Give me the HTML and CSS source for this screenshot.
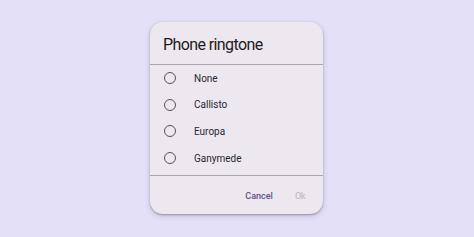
FILE: index.html
```html
<!DOCTYPE html>
<html lang="en">

<head>
    <meta charset="UTF-8">
    <meta name="viewport" content="width=device-width, initial-scale=1.0">
    <title>Phone ringtone</title>
    <link rel="stylesheet" href="styles.css">
</head>

<body>
    <div class="dialog">
        <h2 class="dialog-title">Phone ringtone</h2>
        <div class="dialog-list">
            <label class="option"><span class="radio"></span>None</label>
            <label class="option"><span class="radio"></span>Callisto</label>
            <label class="option"><span class="radio"></span>Europa</label>
            <label class="option"><span class="radio"></span>Ganymede</label>
        </div>
        <div class="dialog-actions">
            <button class="action">Cancel</button>
            <button class="action disabled">Ok</button>
        </div>
    </div>
</body>

</html>
```

FILE: styles.css
```css
body {
    font-family: Roboto, 'Noto Sans', sans-serif;
    margin: 0;
    width: 474px;
    height: 237px;
    background-color: #e3e0f7;
    display: flex;
    justify-content: center;
    padding-top: 22px;
    box-sizing: border-box;
}

.dialog {
    width: 173px;
    height: 192px;
    margin-left: -1px;
    background-color: #ede8ef;
    border-radius: 13px;
    box-shadow: 0 1px 2px rgba(40, 30, 70, 0.35), 0 2px 6px rgba(40, 30, 70, 0.15);
    display: flex;
    flex-direction: column;
}

.dialog-title {
    margin: 0;
    padding: 13px 13px 0;
    height: 29px;
    font-size: 16px;
    font-weight: 400;
    letter-spacing: -0.6px;
    color: #1d1b20;
    border-bottom: 1px solid #a9a5ad;
}

.dialog-list {
    display: flex;
    flex-direction: column;
    height: 110px;
    border-bottom: 1px solid #a9a5ad;
}

.option {
    display: flex;
    align-items: center;
    height: 26.6px;
    font-size: 10px;
    color: #2a2730;
    padding-left: 14px;
}

.radio {
    width: 10px;
    height: 10px;
    border: 1.5px solid #55505b;
    border-radius: 50%;
    margin-right: 18px;
}

.dialog-actions {
    flex: 1;
    display: flex;
    justify-content: flex-end;
    align-items: center;
    gap: 22px;
    padding-right: 18px;
    padding-top: 2px;
}

.action {
    background: none;
    border: none;
    padding: 0;
    font-family: inherit;
    font-size: 9px;
    font-weight: 500;
    color: #5f5285;
}

.action.disabled {
    letter-spacing: -0.4px;
    color: #c3bdcc;
}
```
